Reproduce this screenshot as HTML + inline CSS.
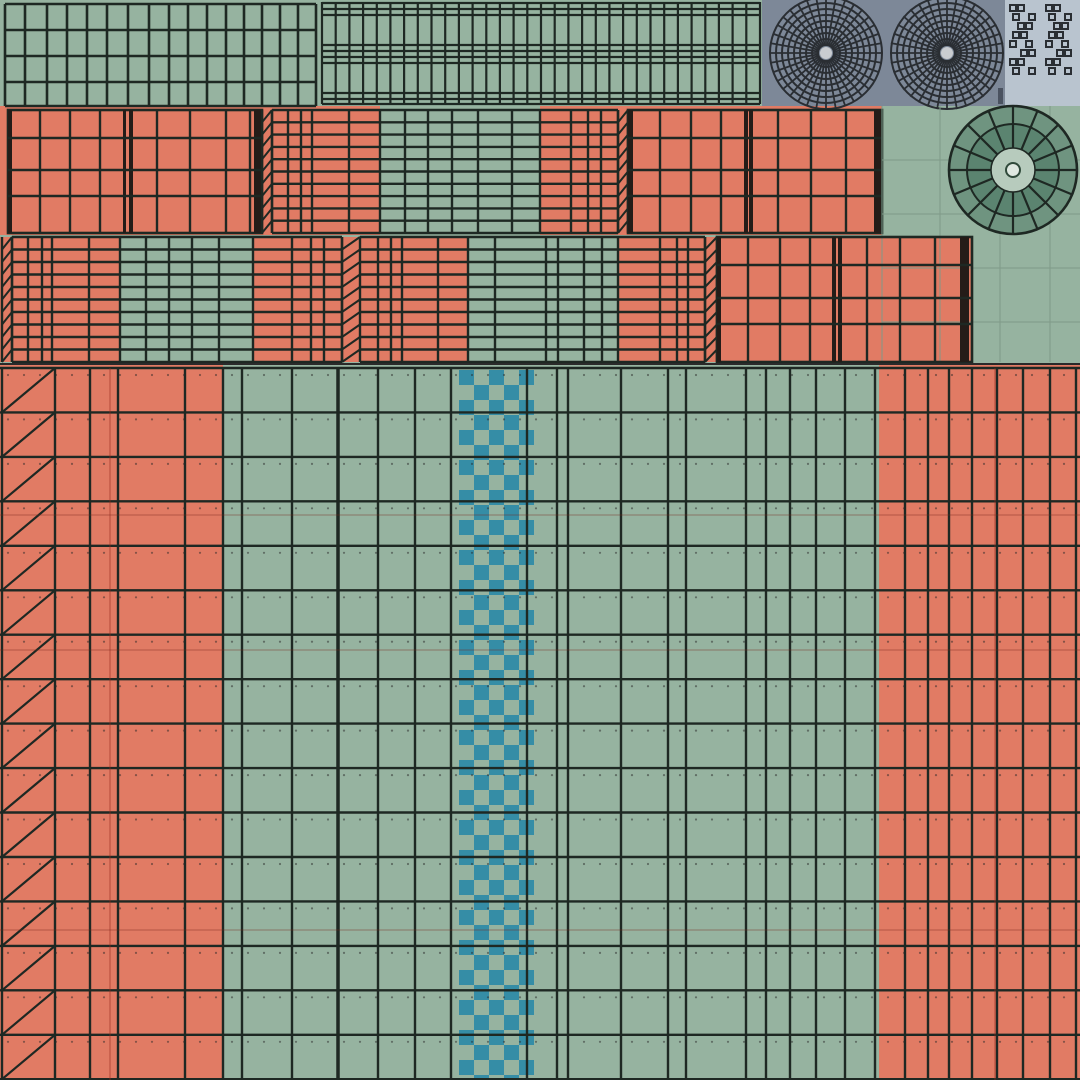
<!DOCTYPE html>
<html><head><meta charset="utf-8"><style>
html,body{margin:0;padding:0;background:#96b3a0}
svg{display:block}
</style></head><body>
<svg id="s" width="1080" height="1080" viewBox="0 0 1080 1080" xmlns="http://www.w3.org/2000/svg">
<rect x="0" y="0" width="1080" height="1080" fill="#96b3a0"/>
<rect x="0" y="106" width="380" height="129" fill="#e17b64"/>
<rect x="540" y="106" width="342" height="129" fill="#e17b64"/>
<rect x="0" y="237" width="120" height="125" fill="#e17b64"/>
<rect x="253" y="237" width="215" height="125" fill="#e17b64"/>
<rect x="618" y="237" width="354" height="125" fill="#e17b64"/>
<rect x="0" y="365" width="223" height="715" fill="#e17b64"/>
<rect x="879" y="365" width="201" height="715" fill="#e17b64"/>
<rect x="762" y="0" width="243" height="106" fill="#7d8898"/>
<rect x="1005" y="0" width="75" height="106" fill="#b9c4cf"/>
<g id="g"></g>
</svg>
<script>
var o=[];
function L(a,b,c,d,w,col){o.push('<line x1="'+a+'" y1="'+b+'" x2="'+c+'" y2="'+d+'" stroke="'+(col||'#1e2823')+'" stroke-width="'+(w||2.4)+'"/>');}
function R(x,y,w,h,f,op){o.push('<rect x="'+x+'" y="'+y+'" width="'+w+'" height="'+h+'" fill="'+f+'"'+(op?' opacity="'+op+'"':'')+'/>');}
function grid(x0,x1,y0,y1,xs,ys,w){xs.forEach(function(x){L(x,y0,x,y1,w)});ys.forEach(function(y){L(x0,y,x1,y,w)});}
function steps(a,b,n){var r=[];for(var i=0;i<=n;i++)r.push(+(a+(b-a)*i/n).toFixed(1));return r;}
function tri(x0,x1,ys){for(var i=0;i<ys.length-1;i++)L(x0,ys[i+1],x1,ys[i],2);L(x0,ys[0],x0,ys[ys.length-1]);L(x1,ys[0],x1,ys[ys.length-1]);}

// top-left panel
grid(5,316,4,106,[5,25,47,67,87,107,128,149,169,188,207,226,244,262,280,298,316],[4,30,56,82,106],2.6);
// top-middle dense
var xs=steps(322,760,32);
grid(322,760,2,104,xs,[3,9,15,45,51,57,63,93,99,104],2.2);
// circles
[[826,53,56],[947,53,57]].forEach(function(c){
  for(var r=8;r<=c[2];r+=6)o.push('<circle cx="'+c[0]+'" cy="'+c[1]+'" r="'+r+'" fill="none" stroke="#2a2e33" stroke-width="2"/>');
  for(var k=0;k<36;k++){var a=k*Math.PI/18;L(c[0]+8*Math.cos(a),c[1]+8*Math.sin(a),c[0]+c[2]*Math.cos(a),c[1]+c[2]*Math.sin(a),1.8,'#2a2e33');}
  o.push('<circle cx="'+c[0]+'" cy="'+c[1]+'" r="6" fill="#c9ccd0"/>');
});
R(998,88,5,16,'#4a5260');
// flower clusters
[[1010,5],[1046,5]].forEach(function(p){
  for(var j=0;j<8;j++)for(var i=0;i<3;i++){if((i+j)%3==2)continue;
    o.push('<rect x="'+(p[0]+i*8+(j%2)*3)+'" y="'+(p[1]+j*9)+'" width="6" height="6" fill="none" stroke="#2a2e33" stroke-width="2"/>');}
});

// ROW 2
var y2=[110,233], h2=steps(110,233,10);
function panel(x0,x1,y0,y1,thin,thick,hs){
  o.push('<rect x="'+x0+'" y="'+y0+'" width="'+(x1-x0)+'" height="'+(y1-y0)+'" fill="none" stroke="#1e2823" stroke-width="2.6"/>');
  thin.forEach(function(x){L(x,y0,x,y1,2.4)});
  thick.forEach(function(t){R(t[0],y0,t[1]-t[0],y1-y0,'#241c18')});
  hs.forEach(function(y){L(x0,y,x1,y,2.4)});
}
panel(8,262,110,233,[40,70,100,157,190,226,250],[[8,12],[123,126],[129,133],[254,261]],[138,170,196]);
tri(262,272,h2);
grid(272,380,110,233,[272,288,301,312,349,380],h2,2.4);
grid(380,540,110,233,[405,428,452,478,512,540],h2,2.4);
grid(540,618,110,233,[571,588,601,618],h2,2.4);
tri(618,628,h2);
panel(628,882,110,233,[660,691,721,778,811,846],[[628,633],[744,748],[749,753],[874,881]],[138,170,196]);
// faint lines in green right
[882,940,1000,1050].forEach(function(x){L(x,106,x,362,1,'#7f9a88')});
[160,214,268,322].forEach(function(y){L(882,y,1080,y,1,'#7f9a88')});
// gear circle
(function(){var cx=1013,cy=170,r=64;
  o.push('<circle cx="'+cx+'" cy="'+cy+'" r="'+r+'" fill="#6f9480" stroke="#1e2823" stroke-width="2.6"/>');
  o.push('<circle cx="'+cx+'" cy="'+cy+'" r="46" fill="#5b8470" stroke="#1e2823" stroke-width="2"/>');
  o.push('<circle cx="'+cx+'" cy="'+cy+'" r="22" fill="#b7cbbd" stroke="#1e2823" stroke-width="1.5"/>');
  o.push('<circle cx="'+cx+'" cy="'+cy+'" r="7" fill="#dfe8e1" stroke="#304a3b" stroke-width="2"/>');
  for(var k=0;k<16;k++){var a=k*Math.PI/8;L(cx+22*Math.cos(a),cy+22*Math.sin(a),cx+r*Math.cos(a),cy+r*Math.sin(a),2.2);}
})();

// ROW 3
var h3=steps(237,362,10);
tri(2,12,h3);
grid(12,120,237,362,[12,28,42,52,89,120],h3,2.4);
grid(120,253,237,362,[146,169,192,219,253],h3,2.4);
grid(253,342,237,362,[292,311,324,342],h3,2.4);
tri(342,360,h3);
grid(360,468,237,362,[378,391,402,438,468],h3,2.4);
grid(468,618,237,362,[495,546,558,584,602,618],h3,2.4);
grid(618,705,237,362,[660,677,688,705],h3,2.4);
tri(705,717,h3);
panel(717,972,237,362,[748,780,810,867,900,935],[[717,721],[832,836],[838,842],[960,969]],[265,298,324]);

// BOTTOM
var hb=[];for(var y=368;y<=1080;y+=44.45)hb.push(+y.toFixed(1));
// checker
for(var r=0;r<48;r++)for(var c=0;c<5;c++){if((r+c)%2==0)R(459+c*15,370+r*15,15,15,'#2c8aa6',0.92);}
grid(0,1080,368,1080,[2,55,90,118,185,223,242,292,338,378,415,451,527,557,568,621,668,686,746,766,790,816,845,875,905,928,949,972,997,1023,1050,1076],hb,2.4);
L(338,368,338,1080,3.5);
for(var i=0;i<hb.length-1;i++)L(2,hb[i+1],55,hb[i],2.2);
// faint seam lines
[650,515,930].forEach(function(y){L(0,y,1080,y,1.2,'rgba(120,40,30,0.35)')});
L(110,368,110,1080,1.2,'rgba(150,40,30,0.5)');L(995,368,995,1080,1.2,'rgba(150,40,30,0.5)');
// rivet dots
for(var i=0;i<hb.length-1;i++){var yy=hb[i]+7;for(var x=8;x<1080;x+=16){o.push('<circle cx="'+x+'" cy="'+yy+'" r="1.1" fill="rgba(40,40,40,0.5)"/>');}}
L(0,364,1080,364,2,'#2a2a2a');
document.getElementById('g').innerHTML=o.join('');
</script>
</body></html>
